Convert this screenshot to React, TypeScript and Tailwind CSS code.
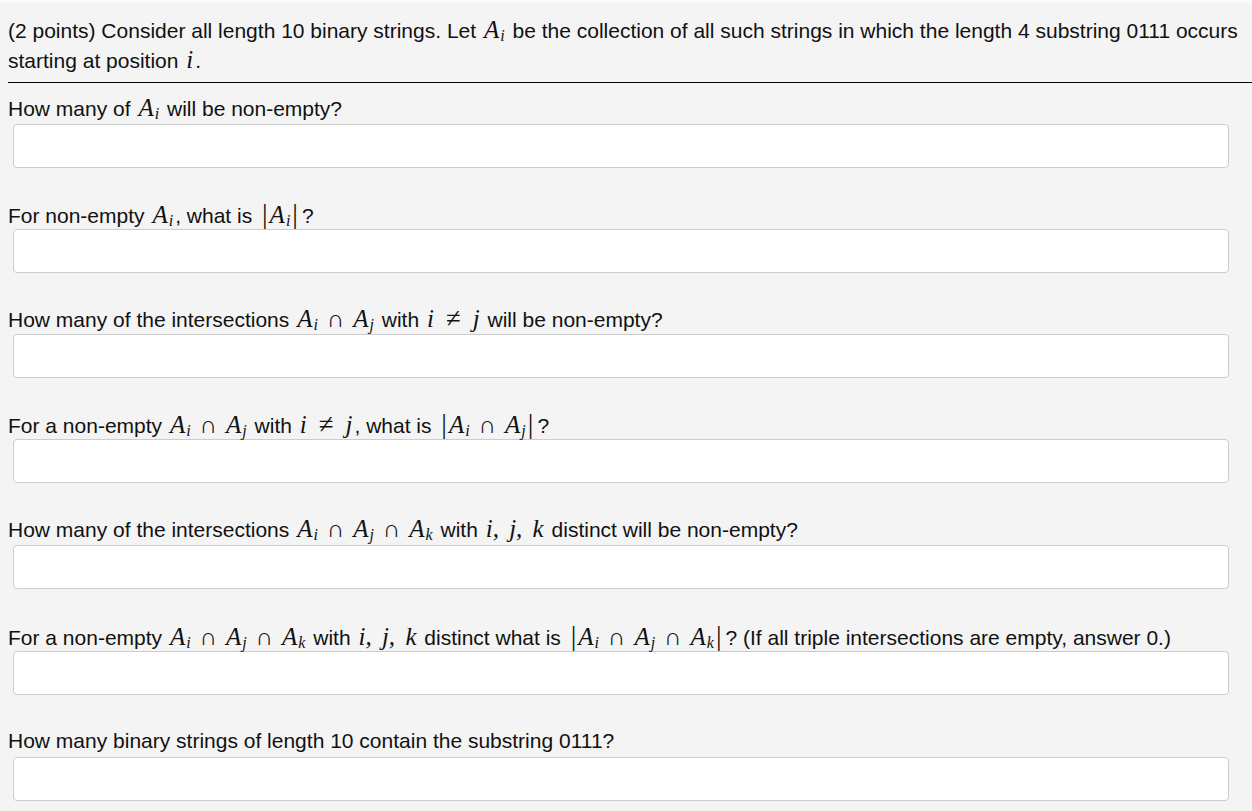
import React from 'react'

// little helpers for the math bits
function V({ n, s }: { n: string; s?: string }) {
  return (
    <span className="whitespace-nowrap">
      <i className="text-[25px] leading-none">{n}</i>
      {s && <sub className="text-[16px] leading-none italic relative -bottom-[3px] ml-[1px]">{s}</sub>}
    </span>
  )
}

function Cap() {
  return <span className="text-[24px] leading-none mx-[9px]">∩</span>
}

function Ne() {
  return <span className="text-[27px] leading-none mx-[12px]">≠</span>
}

function Bar() {
  return <span className="text-[28px] leading-none font-light mx-[2px]">|</span>
}

function I({ children }: { children: React.ReactNode }) {
  return <i className="text-[25px] leading-none">{children}</i>
}

function M({ children }: { children: React.ReactNode }) {
  return <span className="font-['Liberation_Serif',serif] leading-none whitespace-nowrap mx-[2px]">{children}</span>
}

function IJK() {
  return (
    <I>
      i,<span className="mr-[4px]" /> j,<span className="mr-[4px]" /> k
    </I>
  )
}

function Question({ children, last }: { children: React.ReactNode; last?: boolean }) {
  return (
    <div className={last ? 'mb-[33px]' : 'mb-[32px]'}>
      <p className="h-[26px] leading-[26px] whitespace-nowrap">{children}</p>
      <input
        type="text"
        className="block mt-[3px] ml-[5px] w-[1216px] h-[44px] bg-white border border-[#cccccc] rounded-[4px] outline-none"
      />
    </div>
  )
}

export default function App() {
  const ij = (
    <>
      <V n="A" s="i" />
      <Cap />
      <V n="A" s="j" />
    </>
  )
  const ijk = (
    <>
      <V n="A" s="i" />
      <Cap />
      <V n="A" s="j" />
      <Cap />
      <V n="A" s="k" />
    </>
  )

  return (
    <div className="min-h-[811px] bg-[#f4f4f4] text-[#111] font-['Liberation_Sans',Arial,sans-serif] text-[21px]">
      <div className="h-[4px] bg-gradient-to-b from-white to-[#f4f4f4]" />
      <div className="pl-[8px]">
        <p className="leading-[30px] pt-[12px] pb-[6px]">
          (2 points) Consider all length 10 binary strings. Let <M><V n="A" s="i" /></M> be the collection of all such
          strings in which the length 4 substring 0111 occurs
          <br />
          starting at position <M><I>i</I></M>.
        </p>
        <hr className="border-0 border-t-[1.5px] border-black mb-[12px]" />

        <Question>
          How many of <M><V n="A" s="i" /></M> will be non-empty?
        </Question>

        <Question>
          For non-empty <M><V n="A" s="i" /></M>, what is <M><Bar /><V n="A" s="i" /><Bar /></M>?
        </Question>

        <Question>
          How many of the intersections <M>{ij}</M> with <M><I>i</I><Ne /><I>j</I></M> will be non-empty?
        </Question>

        <Question last>
          For a non-empty <M>{ij}</M> with <M><I>i</I><Ne /><I>j</I></M>, what is <M><Bar />{ij}<Bar /></M>?
        </Question>

        <Question last>
          How many of the intersections <M>{ijk}</M> with <M><IJK /></M> distinct will be non-empty?
        </Question>

        <Question last>
          For a non-empty <M>{ijk}</M> with <M><IJK /></M> distinct what is <M><Bar />{ijk}<Bar /></M>? (If all triple intersections are empty, answer 0.)
        </Question>

        <Question>How many binary strings of length 10 contain the substring 0111?</Question>
      </div>
    </div>
  )
}
